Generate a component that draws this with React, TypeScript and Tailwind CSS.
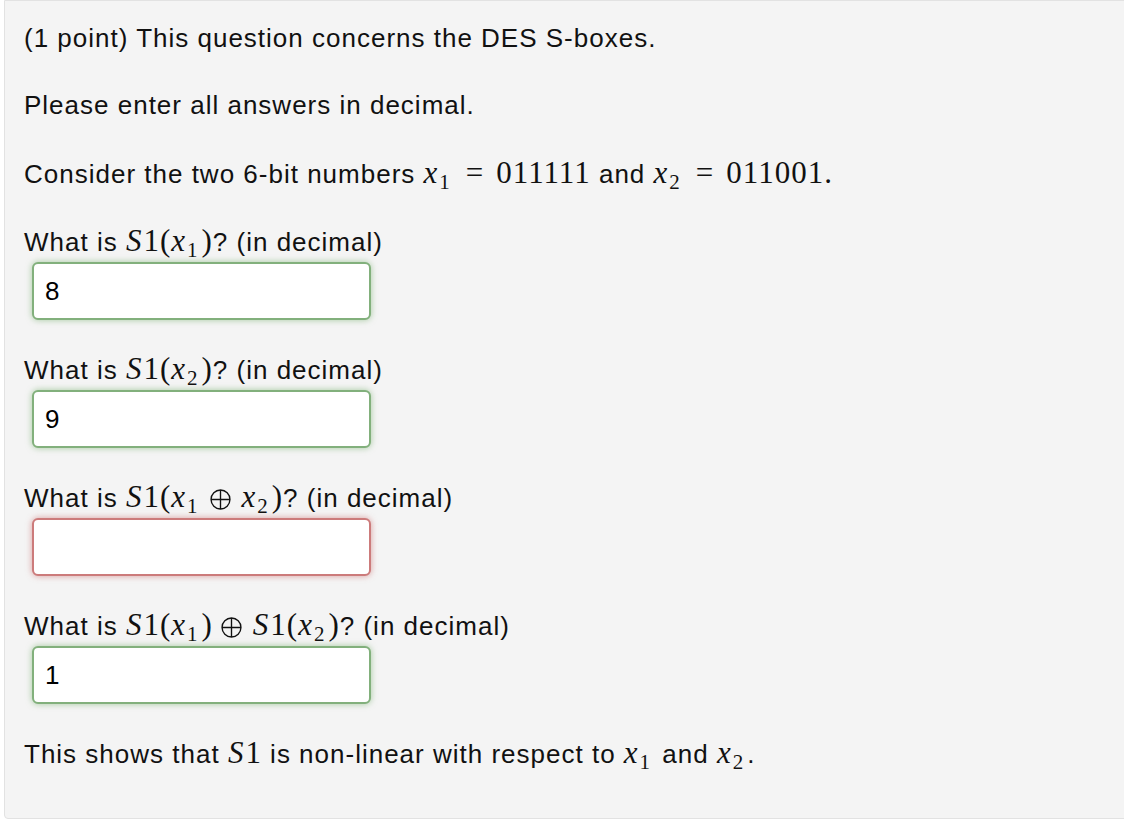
import React from 'react';

const sans = { fontFamily: '"Liberation Sans", Arial, sans-serif' };

// inline math pieces, set in a serif face like the rendered TeX
function I({ children }: { children: React.ReactNode }) {
  return <span className="italic mr-[1px]">{children}</span>;
}

function Sub({ children }: { children: React.ReactNode }) {
  return <sub className="not-italic text-[21px] relative top-[6px] mr-[3px]">{children}</sub>;
}

function M({ children }: { children: React.ReactNode }) {
  return (
    <span
      className="text-[31px] tracking-[1px]"
      style={{ fontFamily: '"Liberation Serif", "Times New Roman", serif' }}
    >
      {children}
    </span>
  );
}

// circled plus operator, thin like the TeX glyph
const Xor = () => (
  <svg
    aria-label="xor"
    viewBox="0 0 20 20"
    className="inline-block w-[21px] h-[21px] ml-[8px] mr-[11px] align-[-3px]"
    fill="none"
    stroke="#111"
    strokeWidth="1.3"
  >
    <circle cx="10" cy="10" r="9" />
    <path d="M10 1v18M1 10h18" />
  </svg>
);
const Eq = () => <span className="mx-[12px]">=</span>;

function Answer({ value, state }: { value: string; state: 'ok' | 'bad' }) {
  const tone =
    state === 'ok'
      ? 'border-[#82b07c] shadow-[0_0_6px_rgba(110,170,100,0.6)]'
      : 'border-[#cc7b7b] shadow-[0_0_6px_rgba(200,100,100,0.6)]';
  return (
    <div
      className={`ml-[8px] mt-[6px] w-[339px] h-[58px] bg-white rounded-[6px] border-2 flex items-center px-[11px] text-[26px] tracking-normal text-black ${tone}`}
    >
      {value}
    </div>
  );
}

function Question({ label, value, state }: { label: React.ReactNode; value: string; state: 'ok' | 'bad' }) {
  return (
    <div className="mb-[34px]">
      <div className="h-[30px] leading-[30px] whitespace-nowrap">{label}</div>
      <Answer value={value} state={state} />
    </div>
  );
}

export default function App() {
  return (
    <div className="w-[1124px] h-[820px] overflow-hidden bg-white" style={sans}>
      <div className="ml-[4px] w-[1130px] h-[819px] bg-[#f4f4f4] border border-[#e2e2e2] rounded-bl-[4px] pl-[19px] pt-[22px] text-[26px] tracking-[1px] text-[#111]">
        <p className="h-[30px] leading-[30px] mb-[37px]">(1 point) This question concerns the DES S-boxes.</p>
        <p className="h-[30px] leading-[30px] mb-[38px]">Please enter all answers in decimal.</p>
        <p className="h-[30px] leading-[30px] mb-[38px] whitespace-nowrap">
          Consider the two 6-bit numbers{' '}
          <M>
            <I>x</I>
            <Sub>1</Sub>
            <Eq />
            011111
          </M>{' '}
          and{' '}
          <M>
            <I>x</I>
            <Sub>2</Sub>
            <Eq />
            011001.
          </M>
        </p>

        <Question
          state="ok"
          value="8"
          label={
            <>
              What is{' '}
              <M>
                <I>S</I>1(<I>x</I>
                <Sub>1</Sub>)
              </M>
              ? (in decimal)
            </>
          }
        />
        <Question
          state="ok"
          value="9"
          label={
            <>
              What is{' '}
              <M>
                <I>S</I>1(<I>x</I>
                <Sub>2</Sub>)
              </M>
              ? (in decimal)
            </>
          }
        />
        <Question
          state="bad"
          value=""
          label={
            <>
              What is{' '}
              <M>
                <I>S</I>1(<I>x</I>
                <Sub>1</Sub>
                <Xor />
                <I>x</I>
                <Sub>2</Sub>)
              </M>
              ? (in decimal)
            </>
          }
        />
        <Question
          state="ok"
          value="1"
          label={
            <>
              What is{' '}
              <M>
                <I>S</I>1(<I>x</I>
                <Sub>1</Sub>)
                <Xor />
                <I>S</I>1(<I>x</I>
                <Sub>2</Sub>)
              </M>
              ? (in decimal)
            </>
          }
        />

        <p className="h-[30px] leading-[30px] whitespace-nowrap">
          This shows that{' '}
          <M>
            <I>S</I>1
          </M>{' '}
          is non-linear with respect to{' '}
          <M>
            <I>x</I>
            <Sub>1</Sub>
          </M>{' '}
          and{' '}
          <M>
            <I>x</I>
            <Sub>2</Sub>
          </M>
          .
        </p>
      </div>
    </div>
  );
}
